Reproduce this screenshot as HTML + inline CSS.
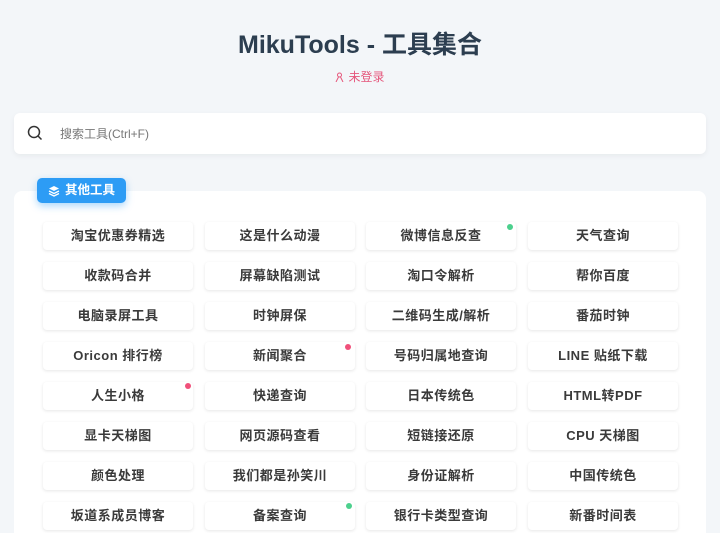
<!DOCTYPE html>
<html style="height:533px;overflow:hidden"><head><meta charset="utf-8"><style>
body{margin:0;background:#f3f6f9;font-family:"Liberation Sans","Noto Sans CJK SC",sans-serif;width:720px;height:533px;overflow:hidden;position:relative}
h1{position:absolute;top:27px;left:0;width:720px;margin:0;text-align:center;font-size:25px;font-weight:bold;color:#2c3e50;line-height:36px}
.login{position:absolute;top:69px;left:0;width:720px;text-align:center;font-size:12px;color:#e5577c;line-height:16px}
.search{position:absolute;left:14px;top:113px;width:692px;height:41px;background:#fff;border-radius:6px;box-shadow:0 2px 6px rgba(0,0,0,.05)}
.search span{position:absolute;left:46px;top:12px;font-size:12px;color:#777}
.card{position:absolute;left:14px;top:191px;width:692px;height:342px;background:#fff;border-radius:8px 8px 0 0}
.badge{position:absolute;left:37px;top:178px;width:89px;height:25px;background:#2d9cf5;border-radius:5px;color:#fff;font-size:12.5px;font-weight:bold;line-height:25px;box-shadow:0 3px 8px rgba(45,156,245,.4);box-sizing:border-box;padding-left:28px}
.item{position:absolute;width:150px;height:28px;background:#fff;border-radius:4px;box-shadow:0 1px 3px rgba(0,0,0,.1);text-align:center;line-height:28px;font-size:13px;font-weight:bold;color:#3a3a3a;letter-spacing:.5px}
.dot{position:absolute;width:6px;height:6px;border-radius:3px}
</style></head><body>
<h1>MikuTools - 工具集合</h1>
<div class="login"><svg width="9" height="10" viewBox="0 0 9 10" style="vertical-align:-1px;margin-right:4px"><circle cx="4.5" cy="3" r="2" fill="none" stroke="#e5577c" stroke-width="1"/><path d="M1 10 L3.5 5 M8 10 L5.5 5" stroke="#e5577c" stroke-width="1" fill="none"/></svg>未登录</div>
<div class="search"><svg width="16" height="16" viewBox="0 0 16 16" style="position:absolute;left:13px;top:12px"><circle cx="7" cy="7" r="5.5" fill="none" stroke="#333" stroke-width="1.5"/><path d="M11 11 L14.5 14.5" stroke="#333" stroke-width="1.5"/></svg><span>搜索工具(Ctrl+F)</span></div>
<div class="card"></div>
<div class="badge"><svg width="12" height="12" viewBox="0 0 12 12" style="position:absolute;left:11px;top:7px"><path d="M6 1 L11 3.5 L6 6 L1 3.5Z" fill="#fff"/><path d="M1 6 L6 8.5 L11 6 M1 8.5 L6 11 L11 8.5" fill="none" stroke="#fff" stroke-width="1.3"/></svg>其他工具</div>
<div id="g"></div>
<script>
var t=["淘宝优惠券精选","这是什么动漫","微博信息反查","天气查询","收款码合并","屏幕缺陷测试","淘口令解析","帮你百度","电脑录屏工具","时钟屏保","二维码生成/解析","番茄时钟","Oricon 排行榜","新闻聚合","号码归属地查询","LINE 贴纸下载","人生小格","快递查询","日本传统色","HTML转PDF","显卡天梯图","网页源码查看","短链接还原","CPU 天梯图","颜色处理","我们都是孙笑川","身份证解析","中国传统色","坂道系成员博客","备案查询","银行卡类型查询","新番时间表"];
var xs=[43,205,366,528],h="";
t.forEach(function(s,i){h+='<div class="item" style="left:'+xs[i%4]+'px;top:'+(222+40*Math.floor(i/4))+'px">'+s+'</div>';});
h+='<div class="dot" style="left:507px;top:224px;background:#4cd08d"></div><div class="dot" style="left:345px;top:344px;background:#f0507a"></div><div class="dot" style="left:185px;top:383px;background:#f0507a"></div><div class="dot" style="left:346px;top:503px;background:#4cd08d"></div>';
document.getElementById("g").innerHTML=h;
</script>
</body></html>
